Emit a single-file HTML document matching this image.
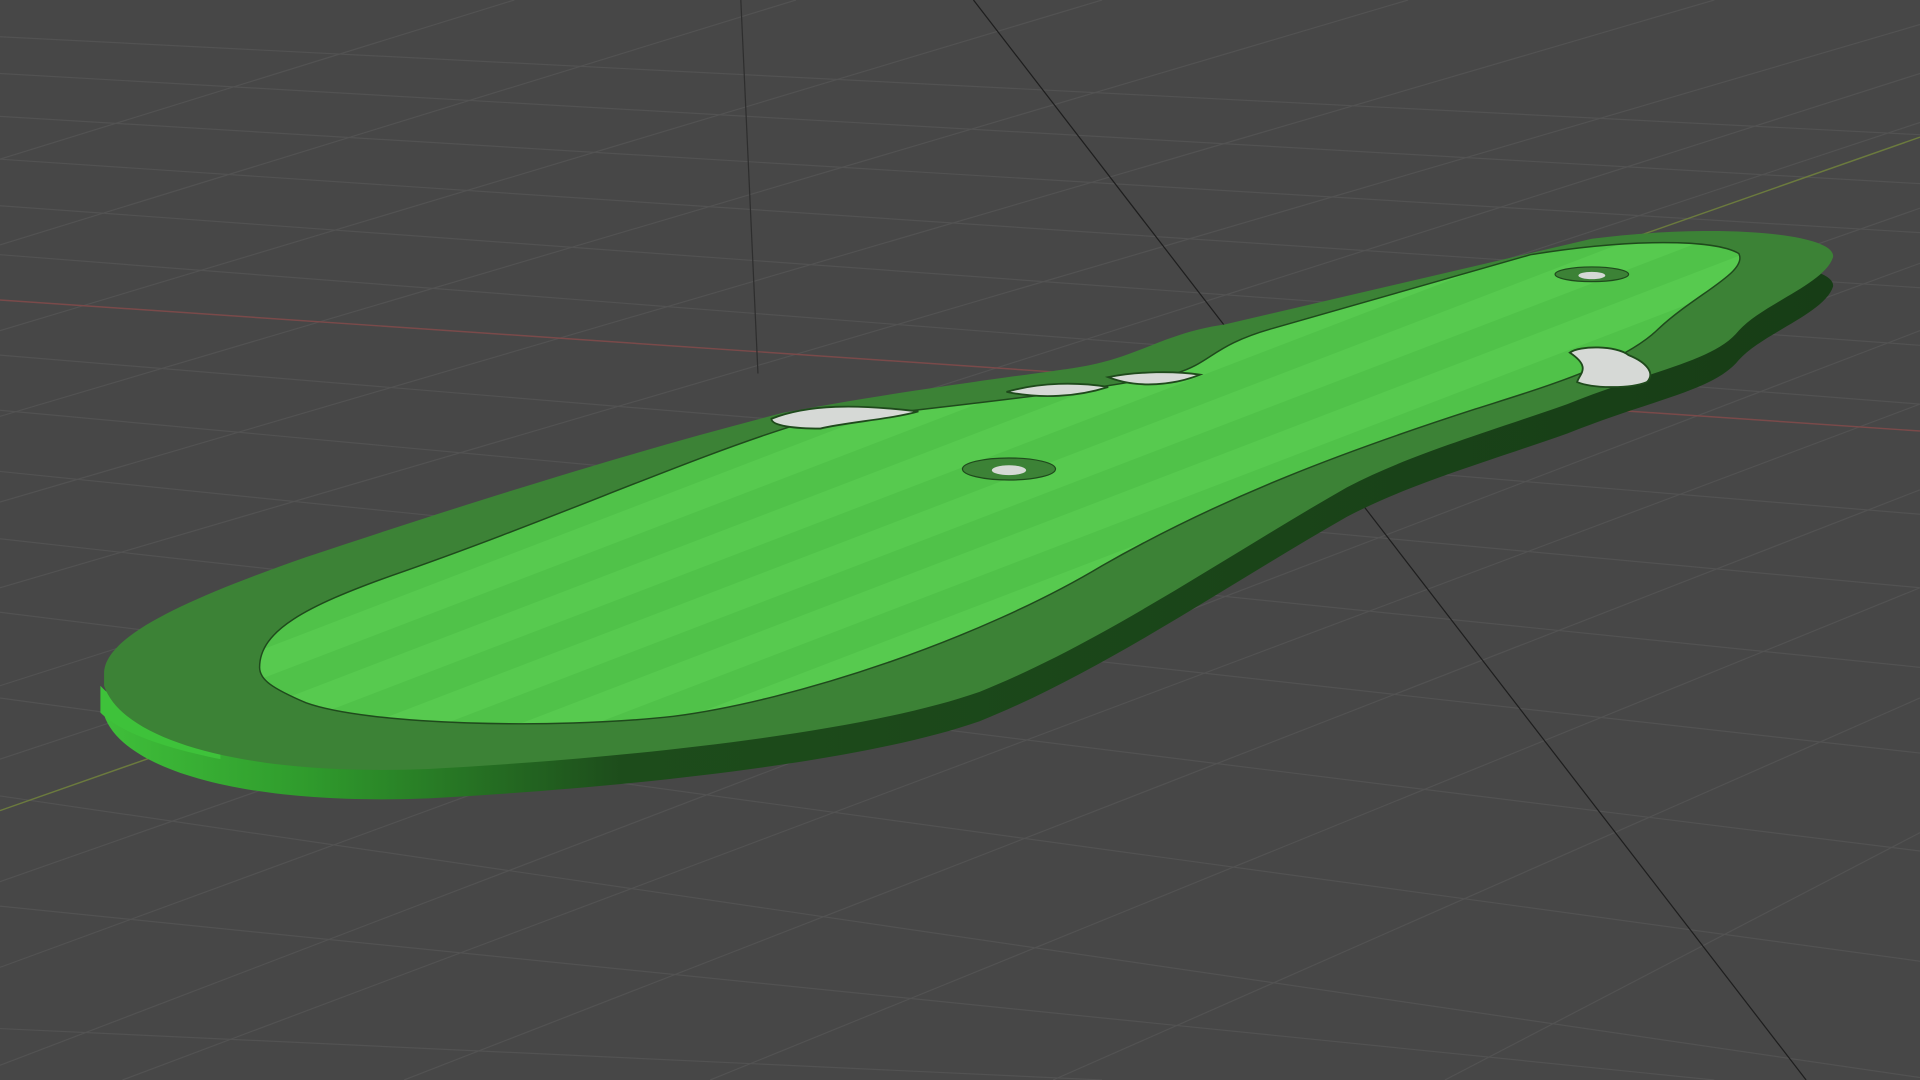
<!DOCTYPE html>
<html><head><meta charset="utf-8"><style>
html,body{margin:0;padding:0;background:#474747;width:1920px;height:1080px;overflow:hidden}
svg{display:block}
</style></head><body>
<svg width="1920" height="1080" viewBox="0 0 1568 882" preserveAspectRatio="none" xmlns="http://www.w3.org/2000/svg">
<defs>
<linearGradient id="side" x1="0" y1="0" x2="1" y2="0">
<stop offset="0" stop-color="#3fbf3a"/><stop offset="0.12" stop-color="#2f9a2c"/><stop offset="0.3" stop-color="#1d4c1b"/><stop offset="1" stop-color="#173d16"/>
</linearGradient>
<pattern id="stripes" width="44" height="44" patternUnits="userSpaceOnUse" patternTransform="rotate(-21)">
<rect width="44" height="22" fill="#57ca4f"/><rect y="22" width="44" height="22" fill="#50c249"/>
</pattern>
</defs>
<rect width="1568" height="882" fill="#474747"/>
<g stroke="#525252" stroke-width="1" fill="none">
<line x1="0" y1="30" x2="1568" y2="110"/><line x1="0" y1="60" x2="1568" y2="150"/>
<line x1="0" y1="95" x2="1568" y2="190"/><line x1="0" y1="130" x2="1568" y2="235"/>
<line x1="0" y1="168" x2="1568" y2="282"/><line x1="0" y1="208" x2="1568" y2="330"/>
<line x1="0" y1="290" x2="1568" y2="420"/><line x1="0" y1="335" x2="1568" y2="480"/>
<line x1="0" y1="385" x2="1568" y2="545"/><line x1="0" y1="440" x2="1568" y2="615"/>
<line x1="0" y1="500" x2="1568" y2="695"/><line x1="0" y1="570" x2="1568" y2="785"/>
<line x1="0" y1="650" x2="1568" y2="880"/><line x1="0" y1="740" x2="1400" y2="882"/>
<line x1="0" y1="840" x2="900" y2="882"/>
<line x1="0" y1="560" x2="1568" y2="60"/><line x1="0" y1="620" x2="1568" y2="100"/>
<line x1="0" y1="720" x2="1568" y2="170"/><line x1="0" y1="790" x2="1568" y2="215"/>
<line x1="0" y1="870" x2="1568" y2="270"/><line x1="100" y1="882" x2="1568" y2="330"/>
<line x1="330" y1="882" x2="1568" y2="400"/><line x1="580" y1="882" x2="1568" y2="480"/>
<line x1="860" y1="882" x2="1568" y2="570"/><line x1="1180" y1="882" x2="1568" y2="680"/>
<line x1="0" y1="480" x2="1568" y2="20"/><line x1="0" y1="410" x2="1400" y2="0"/>
<line x1="0" y1="340" x2="1150" y2="0"/><line x1="0" y1="270" x2="900" y2="0"/>
<line x1="0" y1="200" x2="650" y2="0"/><line x1="0" y1="130" x2="420" y2="0"/>
</g>
<line x1="0" y1="245" x2="1568" y2="352" stroke="#7a4a4a" stroke-width="1.2"/>
<line x1="0" y1="662" x2="1568" y2="112" stroke="#6b7a3e" stroke-width="1.2"/>
<line x1="605" y1="0" x2="619" y2="305" stroke="#2e2e2e" stroke-width="1"/>
<line x1="795" y1="0" x2="1475" y2="882" stroke="#1e1e1e" stroke-width="1"/>
<!-- side -->
<path transform="translate(0,24)" d="M85,550 C85,520 150,490 250,455 C400,405 520,368 640,337 C760,315 850,305 880,300 C930,292 950,272 1000,265 L1300,195 C1400,182 1500,190 1497,210 C1490,232 1440,248 1420,270 C1400,295 1350,302 1280,330 C1200,358 1150,372 1100,398 C1000,455 900,525 800,565 C700,600 500,620 350,628 C200,634 100,605 85,560 Z" fill="url(#side)"/>
<path d="M82,560 L82,582 C100,600 140,612 180,620 L180,598 C130,590 95,575 82,560 Z" fill="#3ec23a"/>
<!-- top rim -->
<path d="M85,550 C85,520 150,490 250,455 C400,405 520,368 640,337 C760,315 850,305 880,300 C930,292 950,272 1000,265 L1300,195 C1400,182 1500,190 1497,210 C1490,232 1440,248 1420,270 C1400,295 1350,302 1280,330 C1200,358 1150,372 1100,398 C1000,455 900,525 800,565 C700,600 500,620 350,628 C200,634 100,605 85,560 Z" fill="#3c8236"/>
<!-- putting surface -->
<path d="M212,545 C212,515 250,495 320,470 C450,425 560,375 650,347 C780,330 880,322 960,305 C990,296 990,282 1040,268 L1250,208 C1330,195 1400,195 1420,207 C1428,222 1385,240 1355,268 C1325,298 1255,318 1205,334 C1100,368 1000,405 900,462 C800,522 650,572 550,585 C450,596 300,592 250,574 C222,562 212,555 212,545 Z" fill="url(#stripes)" stroke="#1f4a1c" stroke-width="1.2"/>
<!-- bunkers -->
<path d="M630,342 C660,330 700,330 750,336 C730,342 690,345 670,350 C650,350 630,348 630,342 Z" fill="#d6d9d6" stroke="#1f4a1c" stroke-width="1.5"/>
<path d="M822,320 C850,312 880,312 905,316 C880,324 850,326 822,320 Z" fill="#d6d9d6" stroke="#1f4a1c" stroke-width="1.5"/>
<path d="M905,308 C930,303 960,303 980,306 C960,314 930,318 905,308 Z" fill="#d6d9d6" stroke="#1f4a1c" stroke-width="1.5"/>
<path d="M1282,288 C1290,282 1320,282 1330,290 C1345,296 1352,305 1345,312 C1330,318 1300,317 1288,312 C1290,305 1300,300 1282,288 Z" fill="#d6d9d6" stroke="#1f4a1c" stroke-width="1.5"/>
<!-- holes -->
<ellipse cx="824" cy="383" rx="38" ry="9" fill="#3c8236" stroke="#1f4a1c"/>
<ellipse cx="824" cy="384" rx="14" ry="4" fill="#d5d9d5"/>
<ellipse cx="1300" cy="224" rx="30" ry="6" fill="#3c8236" stroke="#1f4a1c"/>
<ellipse cx="1300" cy="225" rx="11" ry="3" fill="#d5d9d5"/>
</svg>
</body></html>
